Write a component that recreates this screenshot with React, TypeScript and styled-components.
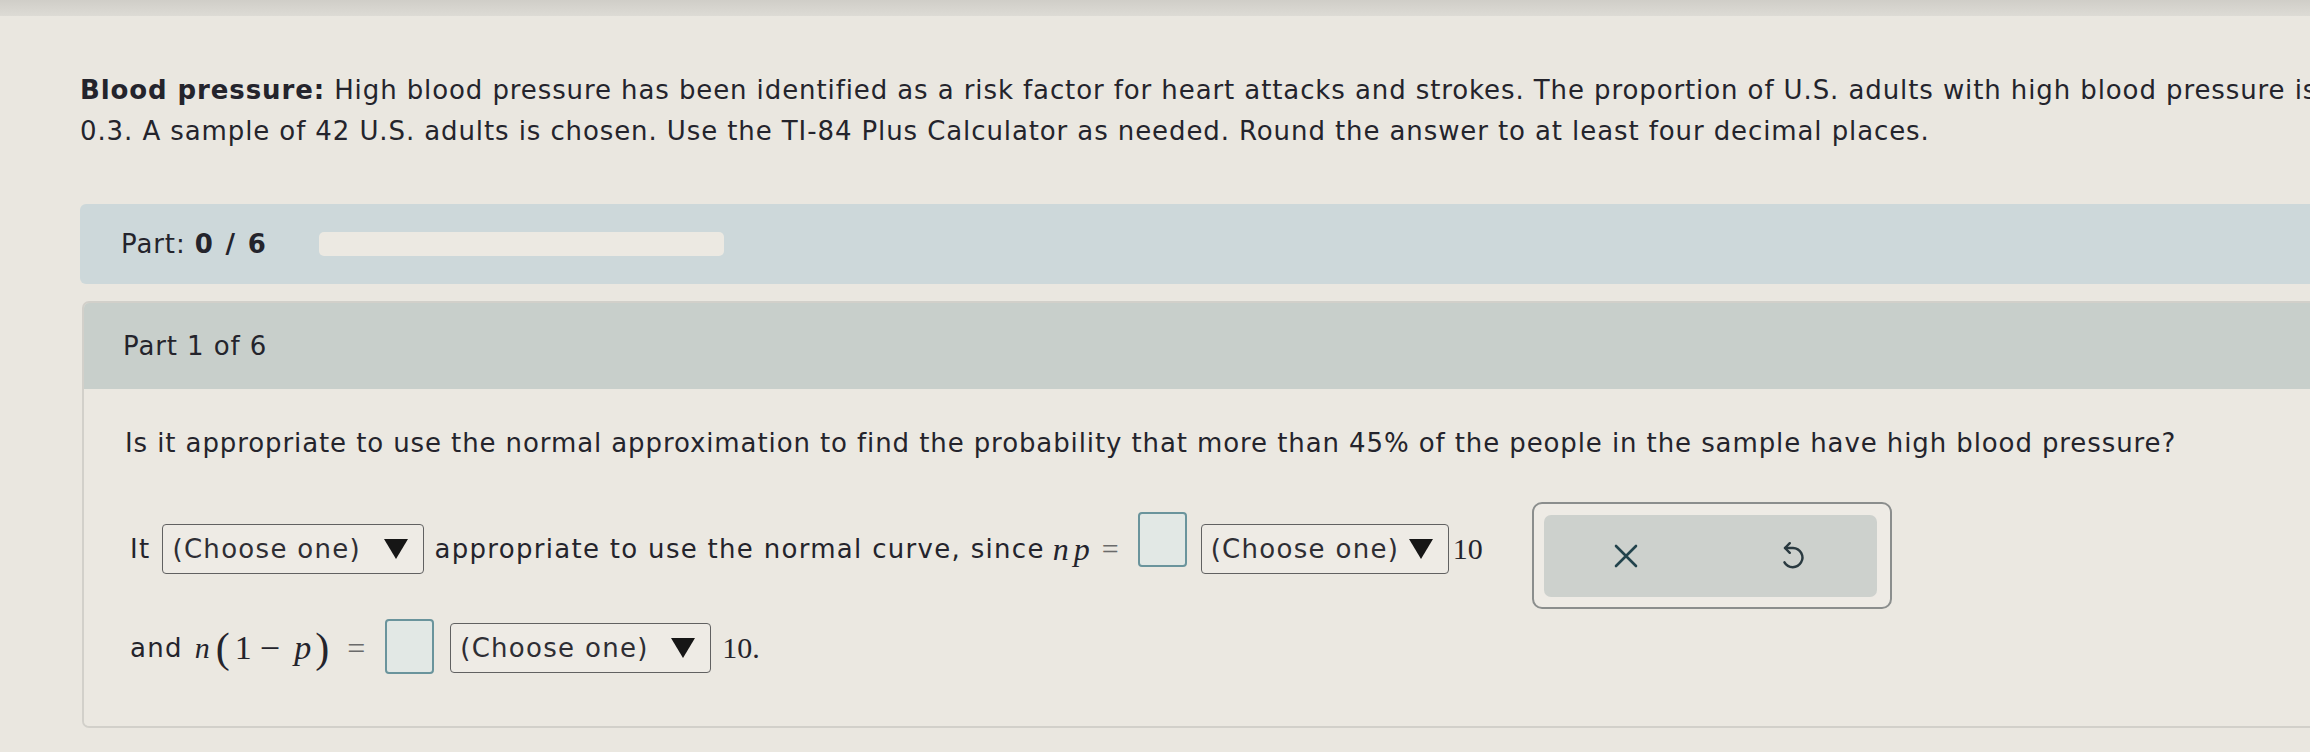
import React from "react";
import styled, { createGlobalStyle } from "styled-components";

const Global = createGlobalStyle`
  html, body { margin: 0; padding: 0; }
  body {
    background: #eae7e0;
    font-family: "DejaVu Sans", Verdana, sans-serif;
    color: #24242c;
    overflow: hidden;
    width: 2310px;
    height: 752px;
  }
`;

const TopBand = styled.div`
  height: 16px;
  background: linear-gradient(#d0cec8, #dddbd5);
`;

const Page = styled.main`
  width: 2400px;
  box-sizing: border-box;
  padding: 54px 0 0 80px;
`;

const Problem = styled.p`
  margin: 0;
  font-size: 26px;
  letter-spacing: 0.9px;
  line-height: 41px;
  white-space: nowrap;
`;

const PartBar = styled.div`
  margin-top: 52px;
  height: 80px;
  display: flex;
  align-items: center;
  padding-left: 41px;
  background: #cdd8da;
  border-radius: 6px 0 0 6px;
  font-size: 26px;
  letter-spacing: 0.9px;
`;

const PartCount = styled.b`
  letter-spacing: 1.8px;
`;

const Progress = styled.div`
  margin-left: 51px;
  width: 405px;
  height: 24px;
  border-radius: 5px;
  background: #ece9e2;
`;

const Card = styled.section`
  margin: 17px 0 0 2px;
  border: 2px solid #d2d0ca;
  border-radius: 7px;
  overflow: hidden;
`;

const CardHeader = styled.header`
  height: 86px;
  display: flex;
  align-items: center;
  padding-left: 39px;
  background: #c8cfcb;
  font-size: 26px;
  letter-spacing: 0.9px;
`;

const CardBody = styled.div`
  padding: 34px 0 50px 41px;
  background: #ebe8e1;
  font-size: 26px;
  letter-spacing: 0.9px;
`;

const Question = styled.p`
  margin: 0 0 31px;
  line-height: 41px;
  white-space: nowrap;
`;

const Row = styled.div<{ $height: number; $gap?: number }>`
  display: flex;
  align-items: center;
  height: ${(p) => p.$height}px;
  margin: 0 0 ${(p) => p.$gap ?? 0}px 5px;
  letter-spacing: 1.3px;
  white-space: nowrap;
`;

const Word = styled.span<{ $ml?: number; $mr?: number }>`
  margin-left: ${(p) => p.$ml ?? 0}px;
  margin-right: ${(p) => p.$mr ?? 0}px;
`;

const Select = styled.div<{ $w: number; $ml?: number }>`
  box-sizing: border-box;
  width: ${(p) => p.$w}px;
  height: 50px;
  margin-left: ${(p) => p.$ml ?? 0}px;
  display: flex;
  align-items: center;
  justify-content: space-between;
  padding: 0 15px 0 9px;
  border: 1.5px solid #616161;
  border-radius: 4px;
  background: #eeebe5;
  color: #2e2e34;
`;

const Caret = styled.span`
  width: 0;
  height: 0;
  border-left: 12px solid transparent;
  border-right: 12px solid transparent;
  border-top: 20px solid #161616;
`;

const AnswerBox = styled.span<{ $ml: number; $lift?: number }>`
  box-sizing: border-box;
  display: inline-block;
  width: 49px;
  height: 55px;
  margin: 0 0 ${(p) => p.$lift ?? 0}px ${(p) => p.$ml}px;
  border: 2px solid #6a949c;
  border-radius: 4px;
  background: #e2e8e5;
`;

const MathVar = styled.span<{ $size?: number; $ml?: number; $ls?: number }>`
  font-family: "Liberation Serif", "Times New Roman", serif;
  font-style: italic;
  font-size: ${(p) => p.$size ?? 30}px;
  letter-spacing: ${(p) => p.$ls ?? 0}px;
  margin-left: ${(p) => p.$ml ?? 0}px;
`;

const MathText = styled.span<{ $size?: number; $color?: string; $ml?: number; $mr?: number }>`
  font-family: "Liberation Serif", "Times New Roman", serif;
  font-size: ${(p) => p.$size ?? 30}px;
  letter-spacing: 0;
  color: ${(p) => p.$color ?? "#24242c"};
  margin-left: ${(p) => p.$ml ?? 0}px;
  margin-right: ${(p) => p.$mr ?? 0}px;
`;

const ActionFrame = styled.div`
  box-sizing: border-box;
  margin: 12px 0 0 49px;
  width: 360px;
  height: 107px;
  padding: 11px 13px 10px 10px;
  border: 2px solid #8b8e8d;
  border-radius: 10px;
  background: #eeebe5;
`;

const ActionPanel = styled.div`
  height: 100%;
  display: flex;
  align-items: center;
  justify-content: space-around;
  border-radius: 7px;
  background: #cdd1cd;
`;

const IconButton = styled.button`
  display: flex;
  align-items: center;
  justify-content: center;
  padding: 0;
  border: 0;
  background: transparent;
  color: #22434c;
`;

const CloseIcon = () => (
  <svg width="26" height="24" viewBox="0 0 26 24" fill="none" stroke="currentColor" strokeWidth="2.6" strokeLinecap="round">
    <path d="M3 2 L23 22 M23 2 L3 22" />
  </svg>
);

const UndoIcon = () => (
  <svg width="28" height="32" viewBox="0 0 26 30" fill="none" stroke="#2a3a40" strokeWidth="2.3" strokeLinecap="round" strokeLinejoin="round">
    <path d="M10 3 L5.5 7.5 L10 12" />
    <path d="M5.5 7.5 H13 A9 9 0 1 1 5 21" />
  </svg>
);

export default function App() {
  return (
    <>
      <Global />
      <TopBand />
      <Page>
        <Problem>
          <b>Blood pressure:</b> High blood pressure has been identified as a risk factor for heart attacks and strokes. The proportion of U.S. adults with high blood pressure is
          <br />
          0.3. A sample of 42 U.S. adults is chosen. Use the TI-84 Plus Calculator as needed. Round the answer to at least four decimal places.
        </Problem>

        <PartBar>
          <span>
            Part: <PartCount>0 / 6</PartCount>
          </span>
          <Progress />
        </PartBar>

        <Card>
          <CardHeader>Part 1 of 6</CardHeader>
          <CardBody>
            <Question>
              Is it appropriate to use the normal approximation to find the probability that more than 45% of the people in the sample have high blood pressure?
            </Question>

            <Row $height={108} $gap={17}>
              <Word $mr={12}>It</Word>
              <Select $w={262}>
                (Choose one) <Caret />
              </Select>
              <Word $ml={10}>appropriate to use the normal curve, since</Word>
              <MathVar $size={32} $ml={8} $ls={5}>np</MathVar>
              <MathText $color="#6a6a6a" $ml={7}>=</MathText>
              <AnswerBox $ml={19} $lift={20} />
              <Select $w={248} $ml={14}>
                (Choose one) <Caret />
              </Select>
              <MathText $ml={4}>10</MathText>
              <ActionFrame>
                <ActionPanel>
                  <IconButton aria-label="Clear">
                    <CloseIcon />
                  </IconButton>
                  <IconButton aria-label="Undo">
                    <UndoIcon />
                  </IconButton>
                </ActionPanel>
              </ActionFrame>
            </Row>

            <Row $height={56}>
              <Word $mr={12}>and</Word>
              <MathVar $size={30}>n</MathVar>
              <MathText $size={42} $ml={6}>(</MathText>
              <MathText $size={34} $ml={5}>1</MathText>
              <MathText $size={36} $ml={8} $mr={14}>−</MathText>
              <MathVar $size={34}>p</MathVar>
              <MathText $size={42} $ml={4}>)</MathText>
              <MathText $size={32} $color="#6a6a6a" $ml={18}>=</MathText>
              <AnswerBox $ml={20} $lift={4} />
              <Select $w={261} $ml={16}>
                (Choose one) <Caret />
              </Select>
              <MathText $ml={11}>10.</MathText>
            </Row>
          </CardBody>
        </Card>
      </Page>
    </>
  );
}
